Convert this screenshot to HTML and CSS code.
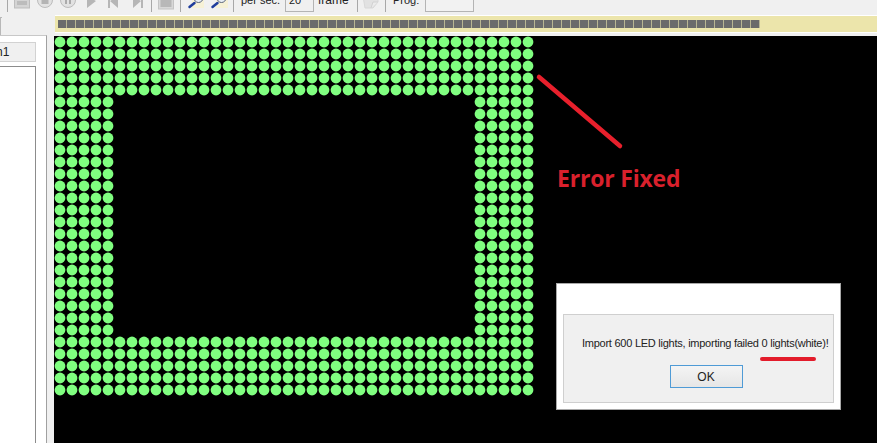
FILE: index.html
```html
<!DOCTYPE html>
<html lang="en">
<head>
<meta charset="utf-8">
<title>LED import</title>
<link rel="stylesheet" href="styles.css">
</head>
<body>
<div class="app">
  <header class="toolbar">
    <div class="toolbar-row">
      <span class="sep sep-first"></span>
      <div class="tool-group">
        <svg class="icon" viewBox="0 0 16 16"><rect x="0.500" y="-2" width="15" height="10" fill="#d4d4d4" stroke="#bdbdbd"/><rect x="3" y="1" width="10" height="4" fill="#bcbcbc"/></svg>
        <svg class="icon" viewBox="0 0 16 16"><circle cx="8" cy="0" r="7.500" fill="#e2e2e2" stroke="#bcbcbc"/><rect x="4.500" y="-4" width="7" height="8" fill="#b4b4b4"/></svg>
        <svg class="icon" viewBox="0 0 16 16"><circle cx="8" cy="0" r="7.500" fill="#e2e2e2" stroke="#bcbcbc"/><rect x="5" y="-4" width="2" height="8" fill="#ababab"/><rect x="9" y="-4" width="2" height="8" fill="#ababab"/></svg>
        <svg class="icon" viewBox="0 0 16 16"><path d="M4 -4L13 1L4 8Z" fill="#b6b6b6"/></svg>
        <svg class="icon" viewBox="0 0 16 16"><path d="M2 -4H4V8H2Z M12 -4V8L4 1Z" fill="#b6b6b6"/></svg>
        <svg class="icon" viewBox="0 0 16 16"><path d="M12 -4H14V8H12Z M4 -4V8L12 1Z" fill="#b6b6b6"/></svg>
      </div>
      <span class="sep sep-a"></span>
      <svg class="icon icon-solo" viewBox="0 0 16 16"><rect x="0.500" y="-3" width="15" height="12" fill="#d8d8d8" stroke="#c4c4c4"/><rect x="2.500" y="-2" width="11" height="9" fill="#b8b8b8"/></svg>
      <span class="sep sep-b"></span>
      <div class="tool-group zoom-group">
        <svg class="icon" viewBox="0 0 16 16"><rect x="4" y="0" width="12" height="8" fill="#f6f1d6"/><circle cx="10.500" cy="-2" r="4.500" fill="#e8eef5" stroke="#5a6478" stroke-width="1"/><path d="M1.500 7L6.500 3" stroke="#1f3d9c" stroke-width="2.500" stroke-linecap="round"/></svg>
        <svg class="icon" viewBox="0 0 16 16"><rect x="4" y="0" width="12" height="8" fill="#f6f1d6"/><circle cx="9.500" cy="-2" r="4.500" fill="#e8eef5" stroke="#5a6478" stroke-width="1"/><path d="M0.500 7L5.500 3" stroke="#1f3d9c" stroke-width="2.500" stroke-linecap="round"/></svg>
      </div>
      <span class="sep sep-c"></span>
      <span class="tool-label label-rate">per sec.</span>
      <span class="tool-input input-rate">20</span>
      <span class="tool-label label-frame">frame</span>
      <span class="sep sep-d"></span>
      <svg class="icon icon-note" viewBox="0 0 17 16"><path d="M1 -4H16V2L11 8H3Z" fill="#e2e2e2" stroke="#d8d8d8"/><path d="M9 8L11 2H16" fill="#ececec" stroke="#d2d2d2"/></svg>
      <span class="sep sep-e"></span>
      <span class="tool-label label-prog">Prog:</span>
      <span class="tool-input input-prog"></span>
    </div>
  </header>
  <div class="workspace">
    <aside class="sidebar">
      <div class="tab-edge"></div>
      <div class="panel">
        <div class="panel-inner">
          <div class="panel-button">n1</div>
          <div class="panel-list"></div>
        </div>
      </div>
    </aside>
    <main class="stage">
      <div class="progress"><div class="progress-blocks"></div></div>
      <div class="canvas">
        <svg class="leds" width="480" height="360" viewBox="0 0 480 360">
          <defs>
            <pattern id="led" width="12" height="12" patternUnits="userSpaceOnUse">
              <circle cx="6" cy="6" r="5.400" fill="#80ff80"/>
            </pattern>
          </defs>
          <path d="M0 0H480V360H0Z M60 60V300H420V60Z" fill="url(#led)" fill-rule="evenodd"/>
        </svg>
        <svg class="arrow" width="90" height="80" viewBox="0 0 90 80"><path d="M2 2L83 71" stroke="#e8202c" stroke-width="4.500" stroke-linecap="round" fill="none"/></svg>
        <div class="note">Error Fixed</div>
      </div>
    </main>
  </div>
  <section class="dialog">
    <div class="dialog-body">
      <p class="dialog-text">Import 600 LED lights, importing failed 0 lights(white)!</p>
      <span class="dialog-mark"></span>
      <button class="dialog-ok" type="button">OK</button>
    </div>
  </section>
</div>
</body>
</html>
```
FILE: styles.css
```css
* { box-sizing: border-box; }
html, body { margin: 0; padding: 0; }
body { width: 877px; height: 443px; overflow: hidden; background: #f0f0f0; font-family: "Liberation Sans", Arial, sans-serif; color: #222; }
.app { position: relative; display: flex; flex-direction: column; width: 877px; height: 443px; }

.toolbar { height: 13px; flex: none; overflow: hidden; }
.toolbar-row { display: flex; height: 26px; margin-top: -14px; padding-left: 7px; }
.sep { flex: none; width: 1px; background: #a8a8a8; }
.icon { flex: none; width: 16px; height: 16px; margin-top: 14px; overflow: visible; }
.tool-group { display: flex; gap: 7px; margin-left: 6px; }
.zoom-group { gap: 8px; margin-left: 7px; }
.sep-a { margin-left: 6px; }
.icon-solo { margin-left: 6px; }
.sep-b { margin-left: 6px; }
.sep-c { margin-left: 5px; }
.tool-label { align-self: flex-end; font-size: 11px; line-height: 13px; margin-bottom: 5px; color: #222; white-space: nowrap; }
.label-rate { margin-left: 7px; width: 38px; }
.tool-input { flex: none; align-self: flex-end; height: 24px; background: #f0f0f0; border: 1px solid #b4b4b4; font-size: 11px; line-height: 13px; padding: 5px 0 0 3px; }
.input-rate { margin-left: 6px; width: 29px; }
.label-frame { margin-left: 4px; width: 33px; font-size: 12px; }
.sep-d { margin-left: 6px; }
.icon-note { width: 17px; margin-left: 4px; }
.sep-e { margin-left: 6px; }
.label-prog { margin-left: 7px; width: 26px; }
.input-prog { margin-left: 6px; width: 49px; background: #f2f2f2; }

.workspace { flex: 1; display: flex; min-height: 0; }
.sidebar { flex: none; width: 47px; display: flex; flex-direction: column; }
.tab-edge { flex: none; height: 18px; margin-top: 4px; width: 2px; border-top: 1px solid #b8b8b8; border-left: 1px solid #b8b8b8; }
.panel { flex: 1; background: #fff; border-top: 1px solid #c8c8c8; border-right: 1px solid #a0a0a0; padding-top: 6px; min-height: 0; }
.panel-inner { display: flex; flex-direction: column; gap: 4px; width: 36px; height: 100%; }
.panel-button { height: 20px; background: #f0f0f0; border: 1px solid #d2d2d2; border-left: 0; font-size: 12px; line-height: 18px; text-indent: -4px; white-space: nowrap; overflow: hidden; }
.panel-list { flex: 1; background: #fff; border: 1px solid #8c8c8c; border-left: 0; border-bottom: 0; }

.stage { flex: 1; display: flex; flex-direction: column; padding-left: 7px; min-width: 0; }
.progress { flex: none; height: 18px; margin-top: 2px; margin-left: 1px; padding: 4px 0 0 3px; background: #ece5ab; border-top: 1px solid #fff; border-bottom: 1px solid #fff; }
.progress-blocks { width: 702px; height: 8px; background: repeating-linear-gradient(90deg, #6b6b6b 0, #6b6b6b 8px, #b9b692 8px, #b9b692 9px); }
.canvas { position: relative; flex: 1; margin-top: 3px; background: #000; min-height: 0; }
.leds { display: block; }
.arrow { position: absolute; left: 483px; top: 39px; overflow: visible; }
.note { position: absolute; left: 503px; top: 126px; font-family: "Open Sans", sans-serif; font-weight: 700; font-size: 23px; letter-spacing: -0.2px; line-height: 32px; color: #d9202c; white-space: nowrap; }

.dialog { position: absolute; left: 556px; top: 283px; width: 285px; height: 127px; padding: 30px 6px 6px; background: #fff; border: 1px solid #a8a8a8; }
.dialog-body { position: relative; height: 100%; display: flex; flex-direction: column; align-items: center; background: #f0f0f0; border: 1px solid #cfcfcf; }
.dialog-text { margin: 21px 0 0; width: 100%; padding-left: 18px; font-size: 11px; letter-spacing: -0.25px; line-height: 14px; color: #222; white-space: nowrap; }
.dialog-mark { position: absolute; left: 196px; top: 42px; width: 56px; height: 4px; border-radius: 2px; background: #e31c2b; }
.dialog-ok { margin-top: 15px; margin-left: 15px; width: 73px; height: 23px; padding: 0; font: 12px "Liberation Sans", Arial, sans-serif; color: #222; background: linear-gradient(#f4f4f4, #e6e6e6); border: 1px solid #4f9bd6; }
```
